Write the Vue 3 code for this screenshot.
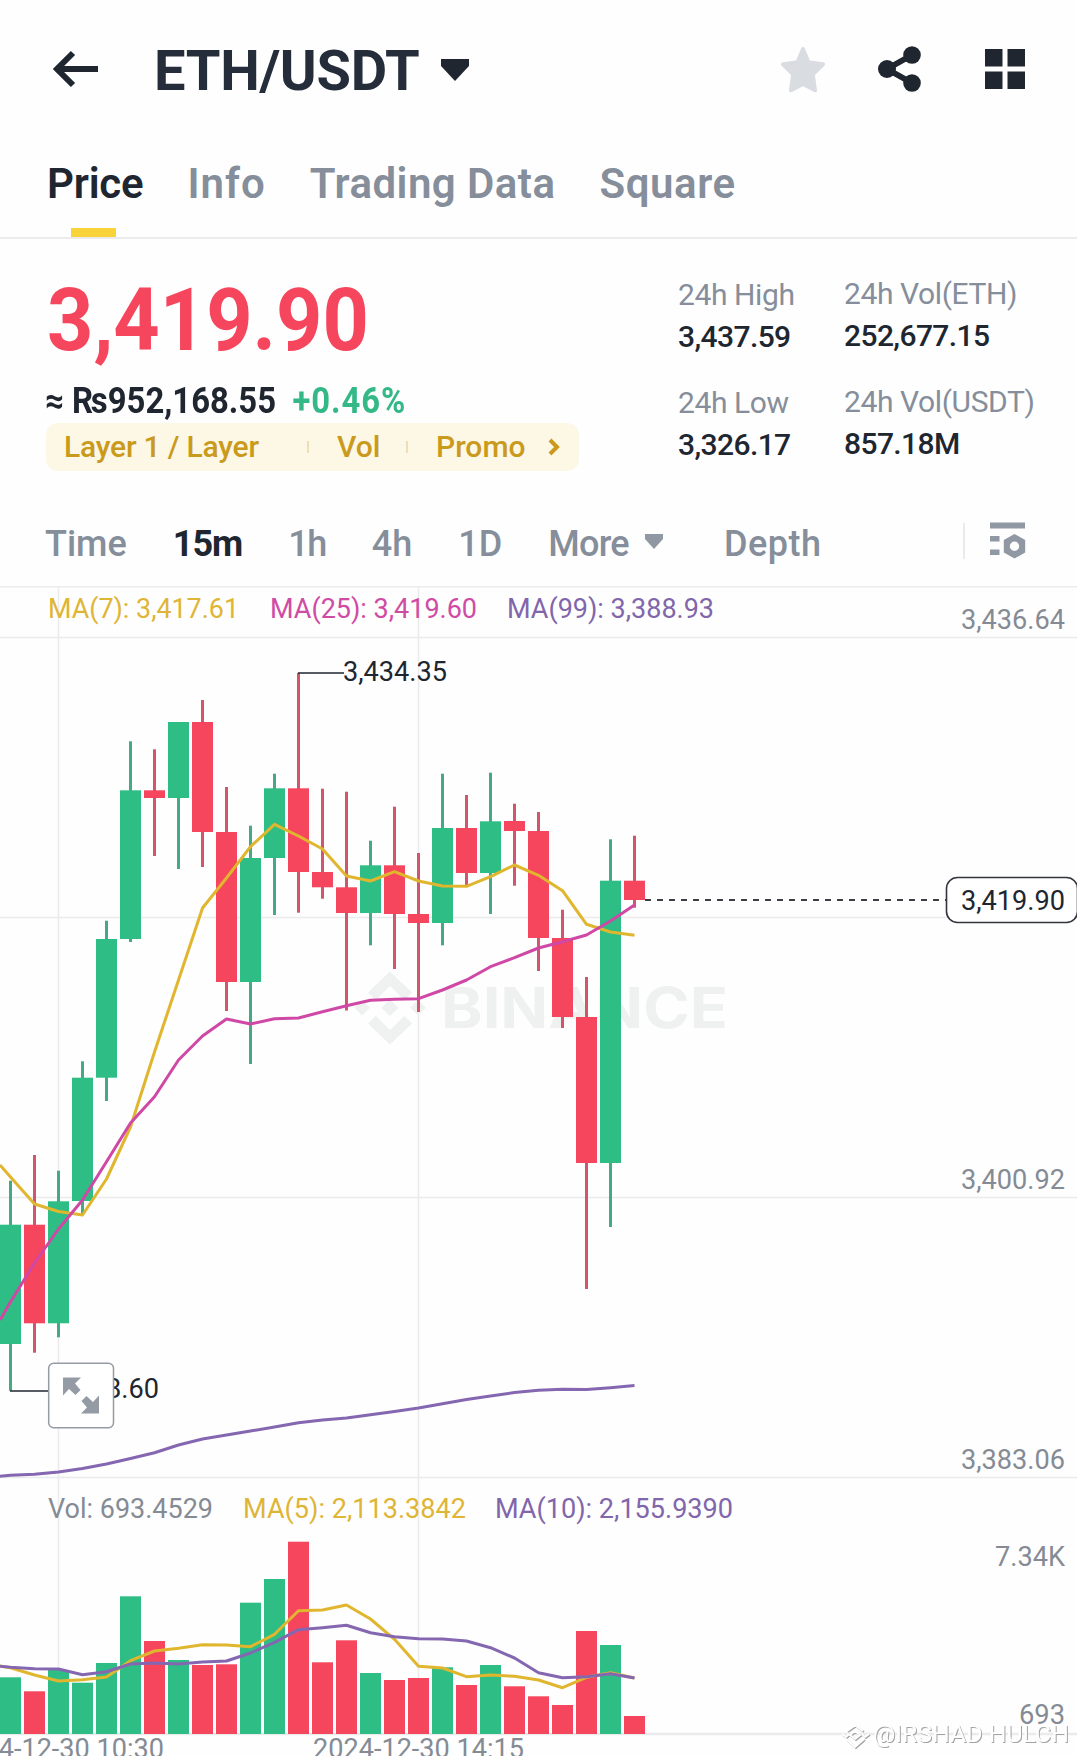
<script setup>
import { ref } from 'vue'

const tabs = ['Price', 'Info', 'Trading Data', 'Square']
const activeTab = ref('Price')

const stats = [
  { label: '24h High', value: '3,437.59' },
  { label: '24h Vol(ETH)', value: '252,677.15' },
  { label: '24h Low', value: '3,326.17' },
  { label: '24h Vol(USDT)', value: '857.18M' },
]

const frames = ['Time', '15m', '1h', '4h', '1D']
const activeFrame = ref('15m')

// candle: [up, high, open/close top, open/close bottom, low, volume top]
const candles = [
  [1, 1180.7, 1224.7, 1344, 1390.7, 1677.3],
  [0, 1155, 1224.7, 1323.3, 1352.7, 1691.3],
  [1, 1170.7, 1201.3, 1323.3, 1337.3, 1670],
  [1, 1061.3, 1077.7, 1201, 1215, 1682.7],
  [1, 920.7, 939, 1077.7, 1101, 1663],
  [1, 741.3, 790.3, 939, 942, 1596.3],
  [0, 749.3, 790.3, 798, 856, 1641],
  [1, 722, 722, 798, 869, 1660],
  [0, 700, 722, 832, 867, 1665],
  [0, 787, 832, 982, 1011, 1664.3],
  [1, 825.7, 858, 982, 1064, 1602.7],
  [1, 773.7, 788.3, 858, 915, 1579],
  [0, 673, 788.3, 872, 912.7, 1541.7],
  [0, 788.7, 872, 887.3, 898.7, 1662.3],
  [0, 791.7, 887.3, 913, 1010.5, 1640.3],
  [1, 840.7, 865.3, 913, 945.3, 1673],
  [0, 806.7, 865.3, 914, 969, 1680],
  [0, 853, 914, 923, 1012, 1678],
  [1, 773.7, 828, 923, 945.3, 1667.3],
  [0, 795, 828, 873, 885.7, 1685],
  [1, 772.7, 821.3, 873, 914, 1665],
  [0, 803.7, 821, 831, 885.7, 1686.3],
  [0, 812, 831, 938, 971, 1696.3],
  [0, 909.7, 938, 1017, 1028, 1705],
  [0, 977, 1017, 1163, 1289, 1631],
  [1, 839.3, 880.7, 1163, 1227, 1645],
  [0, 835.7, 880.7, 900, 907.7, 1716],
].map(([up, high, top, bottom, low, vol], i) => ({
  color: up ? 'up' : 'down',
  x: i * 24,
  high,
  top,
  bottom,
  low,
  vol,
}))

// first value is the point on the left edge, the rest sit on candle centres
const line = (ys) =>
  ys.map((y, i) => `${i === 0 ? 0 : (i - 1) * 24 + 10.5},${y}`).join(' ')

const lines = [
  {
    name: 'yellow',
    points: line([1165, 1177, 1204, 1211.5, 1215, 1179, 1127, 1052, 980, 908, 878, 846.7, 824.3, 836, 849, 876, 881, 871.7, 881, 886, 886.3, 876.7, 865, 875.3, 890.7, 924.3, 932, 935.3]),
  },
  {
    name: 'pink',
    points: line([1320, 1302, 1263, 1229, 1200, 1161.7, 1123, 1096.7, 1060, 1036, 1019, 1024, 1018.7, 1018, 1011.7, 1005.7, 1000.3, 999.3, 998.7, 990, 980, 966.7, 957.7, 948, 941.7, 935, 921, 905]),
  },
  {
    name: 'purple',
    points: line([1476.3, 1475.3, 1474.2, 1472, 1468.5, 1464, 1458.5, 1452.7, 1445, 1439, 1435, 1431, 1427, 1422.7, 1420, 1418, 1414.7, 1411.5, 1408, 1403.8, 1399.5, 1396, 1392.5, 1390.3, 1389.3, 1389.6, 1387.8, 1385.5]),
  },
  {
    name: 'yellow',
    points: line([1666, 1667.8, 1675, 1681, 1679.7, 1677, 1660.7, 1651, 1648.3, 1644.7, 1645, 1646.7, 1634.3, 1610.7, 1610, 1605, 1619, 1639.3, 1666.3, 1668, 1676.7, 1675, 1676.3, 1680, 1687.7, 1677.3, 1672.7, 1678]),
  },
  {
    name: 'purple',
    points: line([1666.3, 1667.3, 1668.7, 1669, 1674.7, 1671.7, 1664, 1663, 1664, 1662, 1661, 1653, 1642.3, 1629.7, 1627.7, 1625.3, 1632.7, 1636.7, 1638.7, 1639, 1641, 1647.7, 1658, 1672.7, 1677.7, 1676.7, 1673.7, 1678]),
  },
]

const labels = [
  { text: 'MA(7): 3,417.61', x: 48, y: 618, w: 191, cls: 'yellow' },
  { text: 'MA(25): 3,419.60', x: 270, y: 618, w: 207, cls: 'pink' },
  { text: 'MA(99): 3,388.93', x: 507, y: 618, w: 207, cls: 'purple' },
  { text: '3,436.64', x: 961, y: 629, w: 104, cls: 'grey' },
  { text: '3,400.92', x: 961, y: 1189, w: 104, cls: 'grey' },
  { text: '3,383.06', x: 961, y: 1469, w: 104, cls: 'grey' },
  { text: '7.34K', x: 995, y: 1566, w: 70, cls: 'grey' },
  { text: '693', x: 1019, y: 1724, w: 46, cls: 'grey' },
  { text: '3,434.35', x: 343, y: 681, w: 104, cls: 'black' },
  { text: '3,388.60', x: 55, y: 1398, w: 104, cls: 'black' },
  { text: 'Vol: 693.4529', x: 48, y: 1518, w: 165, cls: 'grey' },
  { text: 'MA(5): 2,113.3842', x: 243, y: 1518, w: 223, cls: 'yellow' },
  { text: 'MA(10): 2,155.9390', x: 495, y: 1518, w: 238, cls: 'purple' },
  { text: '2024-12-30 10:30', x: -47, y: 1758, w: 211, cls: 'grey' },
  { text: '2024-12-30 14:15', x: 313, y: 1758, w: 211, cls: 'grey' },
]
</script>

<template>
  <div class="page">
    <header>
      <svg class="back" width="46" height="38" viewBox="0 0 46 38">
        <path d="M45 19H6M20 3L4 19l16 16" fill="none" stroke="#202630" stroke-width="6" />
      </svg>
      <h1>ETH/USDT</h1>
      <svg class="caret" width="28" height="22" viewBox="0 0 28 22">
        <path d="M0 0h28v7L14 22 0 7z" fill="#202630" />
      </svg>
      <div class="actions">
        <svg width="44" height="47" viewBox="0 0 44 47">
          <path
            d="M22 3l5.5 13.2L42 18.3 31.8 28.2 34 44.3 22 38 10 44.3l2.2-16.1L2 18.3l14.500-2.100z"
            fill="#d9dce1" stroke="#d9dce1" stroke-width="4" stroke-linejoin="round"
          />
        </svg>
        <svg width="43" height="46" viewBox="0 0 43 46">
          <path d="M34 9L9 23l25 14" fill="none" stroke="#202630" stroke-width="6" />
          <circle cx="34" cy="9" r="8.800" fill="#202630" />
          <circle cx="9" cy="23" r="9" fill="#202630" />
          <circle cx="34" cy="37" r="8.800" fill="#202630" />
        </svg>
        <svg width="40" height="40" viewBox="0 0 40 40">
          <path d="M0 0h17.500v17.500H0zM22.500 0H40v17.500H22.500zM0 22.500h17.500V40H0zM22.500 22.500H40V40H22.500z" fill="#202630" />
        </svg>
      </div>
    </header>

    <nav class="tabs">
      <a v-for="tab in tabs" :key="tab" :class="{ active: tab === activeTab }" @click="activeTab = tab">{{ tab }}</a>
    </nav>

    <section class="summary">
      <div class="left">
        <div class="price">3,419.90</div>
        <div class="fiat"><span>≈ ₨952,168.55</span><span class="change">+0.46%</span></div>
        <div class="tags">
          <span class="layer">Layer 1 / Layer</span>
          <i></i>
          <span class="vol">Vol</span>
          <i></i>
          <span class="promo">Promo</span>
          <svg width="12" height="18" viewBox="0 0 12 18">
            <path d="M2 2l7 7-7 7" fill="none" stroke="#c99a1c" stroke-width="4" />
          </svg>
        </div>
      </div>
      <div class="stats">
        <div v-for="stat in stats" :key="stat.label" class="stat">
          <p>{{ stat.label }}</p>
          <b>{{ stat.value }}</b>
        </div>
      </div>
    </section>

    <div class="frames">
      <a v-for="frame in frames" :key="frame" :class="{ active: frame === activeFrame, hour: frame === '1h' }" @click="activeFrame = frame">{{ frame }}</a>
      <a class="more">
        More
        <svg width="18" height="15" viewBox="0 0 18 15">
          <path d="M0 0h18v5L9 15 0 5z" fill="#8f98a3" />
        </svg>
      </a>
      <a class="depth">Depth</a>
      <div class="settings">
        <svg width="36" height="37" viewBox="0 0 36 37">
          <path d="M0 .500h35v6H0zM0 14h9.500v5.500H0zM0 27.500h9.500V33H0z" fill="#8f98a3" />
          <path d="M24.500 12l10.700 6v12.500l-10.700 6-10.700-6V18zm0 7.500a4.700 4.700 0 1 0 0 9.400 4.700 4.700 0 0 0 0-9.400z" fill="#8f98a3" fill-rule="evenodd" />
        </svg>
      </div>
    </div>

    <svg class="chart" width="1077" height="1170" viewBox="0 586 1077 1170">
      <!-- grid -->
      <g class="grid">
        <path d="M0 586.700H1077M0 637.500H1077M0 917.500H1077M0 1197.500H1077M0 1477.500H1077M58.500 586V1734M418.500 586V1734" />
        <path d="M0 1734H1077" stroke-width="2.500" />
      </g>

      <!-- brand watermark -->
      <g fill="#eff1f1">
        <path d="M390 971.500l22 21-7.700 7.700L390 986l-14.300 14.200-7.700-7.700z" />
        <path d="M390 1044.500l22-21-7.700-7.700L390 1030l-14.300-14.200-7.700 7.700z" />
        <path d="M390 999.500l8.500 8.300-8.500 8.300-8.500-8.300zM362 1000l7.800 7.800-7.800 7.800-7.800-7.800zM418 1000l7.800 7.800-7.800 7.800-7.800-7.800z" />
        <text class="brand" x="441" y="1027.700" textLength="287" lengthAdjust="spacingAndGlyphs">BINANCE</text>
      </g>

      <!-- candles and volume -->
      <g v-for="c in candles" :key="c.x" :class="c.color">
        <rect class="wick" :x="c.x + 9" :y="c.high" width="3" :height="c.low - c.high" />
        <rect :x="c.x" :y="c.top" width="21" :height="c.bottom - c.top" />
        <rect :x="c.x" :y="c.vol" width="21" :height="1734 - c.vol" />
      </g>

      <polyline v-for="(l, i) in lines" :key="i" class="ma" :class="l.name" :points="l.points" />

      <path d="M298 673H344M10 1391H56" stroke="#202630" stroke-width="1.500" />
      <text
        v-for="l in labels"
        :key="l.text"
        class="label"
        :class="l.cls"
        :x="l.x"
        :y="l.y"
        :textLength="l.w"
        lengthAdjust="spacingAndGlyphs"
      >{{ l.text }}</text>

      <!-- last price -->
      <path d="M645 900H946" stroke="#3a3d42" stroke-width="1.800" stroke-dasharray="6 6" />
      <rect x="946.500" y="877.500" width="131" height="45" rx="11" fill="#fff" stroke="#33373d" stroke-width="1.600" />
      <text class="label black" x="961" y="910" textLength="104" lengthAdjust="spacingAndGlyphs">3,419.90</text>

      <!-- fullscreen button -->
      <rect x="48.700" y="1363.300" width="64.800" height="64.500" rx="5" fill="#fff" stroke="#959ba5" stroke-width="1.500" />
      <path d="M63 1377.500h18l-6 6 5.500 6.500-5 5-6.500-6-6 6.500zM99 1413.500H81l6-6-5.500-6.500 5-5 6.500 6 6-6.500z" fill="#959ba5" />

      <!-- author mark -->
      <g class="author">
        <path d="M847 1731l8-5.500 8 5.500M842 1734l4 3 3-3M850 1735l5-4 5 4-5 4zM862 1734l3 3 4-3M846 1739l9 8 9-8" fill="none" stroke="#fff" stroke-width="2" />
        <text x="873" y="1742" textLength="196" lengthAdjust="spacingAndGlyphs">@IRSHAD HULCH</text>
      </g>
    </svg>
  </div>
</template>

<style>
body {
  margin: 0;
  background: #fefefe;
}
</style>

<style scoped>
* {
  box-sizing: border-box;
}

.page {
  width: 1077px;
  height: 1756px;
  overflow: hidden;
  background: #fefefe;
  font-family: Roboto, "Liberation Sans", sans-serif;
  color: #202630;
}

svg {
  display: block;
}

header {
  display: flex;
  align-items: center;
  height: 138px;
  padding: 0 52px 0 53px;
}
h1 {
  margin: 4px 0 0 55px;
  font-size: 56px;
  font-weight: 700;
  line-height: 64px;
  letter-spacing: -0.3px;
  color: #252d3b;
}
.caret {
  margin: 2px 0 0 22px;
}
.actions {
  display: flex;
  align-items: center;
  margin-left: auto;
}
.actions svg:nth-child(2) {
  margin: 0 64px 0 53px;
}

.tabs {
  display: flex;
  gap: 44px;
  height: 101px;
  padding: 21px 0 0 47px;
  border-bottom: 2px solid #ebebed;
  font-size: 42px;
  font-weight: 600;
  line-height: 50px;
  letter-spacing: 0.45px;
  color: #858e9a;
}
.tabs a {
  position: relative;
}
.tabs a:nth-child(2) {
  letter-spacing: 1px;
}
.tabs a:last-child {
  letter-spacing: 0.6px;
}
.tabs .active {
  letter-spacing: -0.2px;
  color: #202630;
}
.tabs .active::after {
  content: "";
  position: absolute;
  left: 24px;
  bottom: 0;
  width: 45px;
  height: 9px;
  background: #f8d33a;
}

.summary {
  display: flex;
  height: 258px;
  padding-left: 45px;
}
.left {
  width: 633px;
  padding-top: 41px;
}
.price {
  margin-left: 2px;
  font-size: 87px;
  font-weight: 700;
  line-height: 80px;
  color: #f6465d;
  transform: scaleX(0.93);
  transform-origin: left;
}
.fiat {
  display: flex;
  gap: 18px;
  margin-top: 19px;
  font-size: 36px;
  font-weight: 700;
  line-height: 44px;
  white-space: nowrap;
  transform: scaleX(0.912);
  transform-origin: left;
}
.change {
  letter-spacing: 1px;
  color: #35b888;
}
.tags {
  display: flex;
  align-items: center;
  width: 533px;
  height: 48px;
  margin: 0 0 0 1px;
  padding-left: 18px;
  border-radius: 12px;
  background: #fdf7e5;
  font-size: 30px;
  font-weight: 500;
  line-height: 34px;
  color: #c99a1c;
}
.tags i {
  width: 2px;
  height: 12px;
  background: #ecdfb8;
}
.layer {
  width: 243px;
  letter-spacing: -0.2px;
}
.vol {
  width: 69px;
  margin-left: 28px;
}
.promo {
  width: 112px;
  margin-left: 28px;
}

.stats {
  display: grid;
  grid-template-columns: 166px 230px;
  grid-auto-rows: 82px;
  row-gap: 26px;
  padding-top: 36px;
  font-size: 30px;
  line-height: 40px;
}
.stat:nth-child(even) {
  margin-top: -1px;
}
.stat p {
  margin: 0 0 2px;
  letter-spacing: -0.4px;
  color: #858e9a;
}
.stat b {
  font-weight: 500;
  letter-spacing: -0.6px;
}

.frames {
  display: flex;
  align-items: center;
  gap: 46px;
  height: 89px;
  padding: 5px 51px 0 45px;
  font-size: 36px;
  font-weight: 500;
  color: #858e9a;
}
.frames .hour {
  letter-spacing: -1.5px;
}
.frames .active {
  font-weight: 700;
  letter-spacing: -1px;
  color: #202630;
}
.more {
  display: flex;
  gap: 16px;
  letter-spacing: -0.7px;
}
.more svg {
  margin-top: 11px;
}
.depth {
  margin-left: 15px;
  letter-spacing: 0.5px;
}
.settings {
  display: flex;
  align-items: center;
  height: 36px;
  margin: -7px 0 0 auto;
  padding-left: 25px;
  border-left: 2px solid #e9eaed;
}

.grid {
  fill: none;
  stroke: #ebebed;
  stroke-width: 1.5;
}
.up {
  fill: #2ebd85;
}
.up .wick {
  fill: #43aa84;
}
.down {
  fill: #f6465d;
}
.down .wick {
  fill: #cf566c;
}
.ma {
  fill: none;
  stroke-width: 3;
  stroke-linejoin: round;
}
.ma.yellow {
  stroke: #e0b62e;
}
.ma.pink {
  stroke: #cf48a5;
}
.ma.purple {
  stroke: #8467b0;
}
.label {
  font-size: 28px;
}
.label.yellow {
  fill: #dfb536;
}
.label.pink {
  fill: #d04ba4;
}
.label.purple {
  fill: #8166ab;
}
.label.grey {
  fill: #858b94;
}
.label.black {
  fill: #202630;
}
.brand {
  font-family: Inter, sans-serif;
  font-size: 56px;
  font-weight: 700;
}
.author {
  fill: #fff;
  font-size: 24px;
  filter: drop-shadow(1px 1px 0 #a3a3a3);
}
</style>
